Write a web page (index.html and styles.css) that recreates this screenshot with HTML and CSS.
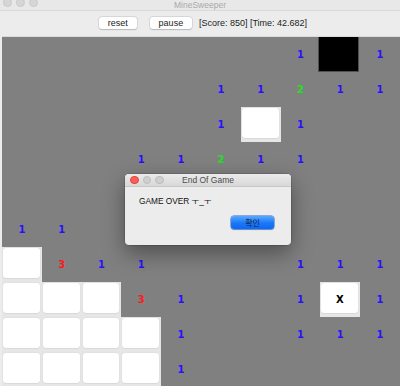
FILE: index.html
```html
<!DOCTYPE html>
<html>
<head>
<meta charset="utf-8">
<title>MineSweeper</title>
<link rel="stylesheet" href="styles.css">
</head>
<body>
<div class="titlebar">
  <div class="lights"><span></span><span></span><span></span></div>
  <div class="wtitle">MineSweeper</div>
  <div></div>
</div>
<div class="toolbar">
  <div class="btn reset">reset</div>
  <div class="btn pause">pause</div>
  <div class="status">[Score: 850] [Time: 42.682]</div>
</div>
<div class="board">
  <!-- row 0 -->
  <div class="cell"></div><div class="cell"></div><div class="cell"></div><div class="cell"></div><div class="cell"></div><div class="cell"></div><div class="cell"></div><div class="cell n1">1</div><div class="cell mine"></div><div class="cell n1">1</div>
  <!-- row 1 -->
  <div class="cell"></div><div class="cell"></div><div class="cell"></div><div class="cell"></div><div class="cell"></div><div class="cell n1">1</div><div class="cell n1">1</div><div class="cell n2">2</div><div class="cell n1">1</div><div class="cell n1">1</div>
  <!-- row 2 -->
  <div class="cell"></div><div class="cell"></div><div class="cell"></div><div class="cell"></div><div class="cell"></div><div class="cell n1">1</div><div class="cell btncell"><div class="face"></div></div><div class="cell n1">1</div><div class="cell"></div><div class="cell"></div>
  <!-- row 3 -->
  <div class="cell"></div><div class="cell"></div><div class="cell"></div><div class="cell n1">1</div><div class="cell n1">1</div><div class="cell n2">2</div><div class="cell n1">1</div><div class="cell n1">1</div><div class="cell"></div><div class="cell"></div>
  <!-- row 4 -->
  <div class="cell"></div><div class="cell"></div><div class="cell"></div><div class="cell"></div><div class="cell"></div><div class="cell"></div><div class="cell"></div><div class="cell"></div><div class="cell"></div><div class="cell"></div>
  <!-- row 5 -->
  <div class="cell n1">1</div><div class="cell n1">1</div><div class="cell"></div><div class="cell"></div><div class="cell"></div><div class="cell"></div><div class="cell"></div><div class="cell"></div><div class="cell"></div><div class="cell"></div>
  <!-- row 6 -->
  <div class="cell btncell"><div class="face"></div></div><div class="cell n3">3</div><div class="cell n1">1</div><div class="cell n1">1</div><div class="cell"></div><div class="cell"></div><div class="cell"></div><div class="cell n1">1</div><div class="cell n1">1</div><div class="cell n1">1</div>
  <!-- row 7 -->
  <div class="cell btncell"><div class="face"></div></div><div class="cell btncell"><div class="face"></div></div><div class="cell btncell"><div class="face"></div></div><div class="cell n3">3</div><div class="cell n1">1</div><div class="cell"></div><div class="cell"></div><div class="cell n1">1</div><div class="cell btncell"><div class="face">X</div></div><div class="cell n1">1</div>
  <!-- row 8 -->
  <div class="cell btncell"><div class="face"></div></div><div class="cell btncell"><div class="face"></div></div><div class="cell btncell"><div class="face"></div></div><div class="cell btncell"><div class="face"></div></div><div class="cell n1">1</div><div class="cell"></div><div class="cell"></div><div class="cell n1">1</div><div class="cell n1">1</div><div class="cell n1">1</div>
  <!-- row 9 -->
  <div class="cell btncell"><div class="face"></div></div><div class="cell btncell"><div class="face"></div></div><div class="cell btncell"><div class="face"></div></div><div class="cell btncell"><div class="face"></div></div><div class="cell n1">1</div><div class="cell"></div><div class="cell"></div><div class="cell"></div><div class="cell"></div><div class="cell"></div>
</div>

<div class="dialog">
  <div class="dtitlebar">
    <div class="dlights"><span class="red"></span><span></span><span></span></div>
    <div class="dtitle">End Of Game</div>
    <div></div>
  </div>
  <div class="dbody">
    <div class="msg">GAME OVER ㅜ_ㅜ</div>
    <div class="okrow"><div class="okbtn">확인</div></div>
  </div>
</div>
</body>
</html>
```
FILE: styles.css
```css
html, body {
  margin: 0;
  padding: 0;
}
body {
  width: 400px;
  height: 386px;
  overflow: hidden;
  background: #ececec;
  font-family: "Liberation Sans", Arial, "Noto Sans CJK KR", sans-serif;
  position: relative;
}

/* window title bar */
.titlebar {
  height: 11px;
  box-sizing: border-box;
  display: grid;
  grid-template-columns: 1fr auto 1fr;
  background: #e8e8e8;
  border-bottom: 1px solid #d9d9d9;
  overflow: hidden;
}
.lights {
  display: flex;
  gap: 4px;
  padding-left: 3px;
  margin-top: -2px;
}
.lights span {
  width: 9px;
  height: 9px;
  box-sizing: border-box;
  border-radius: 50%;
  background: #d6d6d6;
  border: 1px solid #c9c9c9;
}
.wtitle {
  font-size: 8.5px;
  line-height: 10px;
  color: #a8a8a8;
}

/* toolbar */
.toolbar {
  height: 25px;
  display: flex;
  align-items: center;
  justify-content: center;
  padding-left: 6px;
}
.btn {
  height: 12px;
  line-height: 12px;
  font-size: 9px;
  color: #222;
  text-align: center;
  background: #fff;
  border-radius: 3px;
  box-shadow: 0 0 0 0.5px #c6c6c6, 0 0.5px 1px rgba(0, 0, 0, 0.25);
  margin-top: -1px;
}
.reset {
  width: 38px;
  margin-right: 13px;
}
.pause {
  width: 42px;
  margin-right: 7px;
}
.status {
  font-size: 9px;
  color: #1b1b1b;
  margin-top: -1px;
}

/* board */
.board {
  margin-left: 2px;
  width: 398px;
  border-top: 1px solid #dadada;
  background: #808080;
  display: grid;
  grid-template-columns: repeat(10, 1fr);
  grid-auto-rows: 35px;
}
.cell {
  display: flex;
  align-items: center;
  justify-content: center;
  font-family: "DejaVu Sans", sans-serif;
  font-weight: bold;
  font-size: 10px;
  min-width: 0;
}
.n1 { color: #2a10ff; }
.n2 { color: #1fe01f; }
.n3 { color: #ff1a1a; }

.btncell {
  background: #e6e6e6;
  padding: 1px 2px 4px 1px;
  box-sizing: border-box;
  align-items: stretch;
  justify-content: stretch;
}
.face {
  flex: 1;
  background: #fff;
  border-radius: 3px;
  box-shadow: 0 0.5px 0 #cfcfcf, 0 0 0 0.5px #dedede;
  display: flex;
  align-items: center;
  justify-content: center;
  color: #000;
  font-size: 10px;
  padding-top: 2px;
}
.mine {
  background: #000;
  border: 1px solid #505050;
  border-top: none;
  margin-left: -2px;
  margin-right: 1px;
}

/* dialog */
.dialog {
  position: absolute;
  left: 125px;
  top: 174px;
  width: 166px;
  height: 71px;
  background: #ececec;
  border-radius: 4px;
  box-shadow: 0 0 0 0.5px rgba(0, 0, 0, 0.25), 0 8px 22px rgba(0, 0, 0, 0.4);
  overflow: hidden;
}
.dtitlebar {
  height: 13px;
  box-sizing: border-box;
  background: linear-gradient(#ebebeb, #d8d8d8);
  border-bottom: 1px solid #c6c6c6;
  display: grid;
  grid-template-columns: 1fr auto 1fr;
  align-items: center;
}
.dlights {
  display: flex;
  gap: 4px;
  padding-left: 5px;
}
.dlights span {
  width: 8.5px;
  height: 8.5px;
  box-sizing: border-box;
  border-radius: 50%;
  background: #cfcfcf;
  border: 0.5px solid #bcbcbc;
}
.dlights .red {
  background: #fc5e57;
  border-color: #df4841;
}
.dtitle {
  font-size: 8.5px;
  color: #4c4c4c;
  line-height: 12px;
}
.dbody {
  padding: 9px 17px 0 14px;
}
.msg {
  font-size: 8.3px;
  line-height: 10px;
  color: #111;
  font-family: "Liberation Sans", Arial, "Noto Sans CJK KR", sans-serif;
}
.okrow {
  display: flex;
  justify-content: flex-end;
  margin-top: 10px;
}
.okbtn {
  width: 43px;
  height: 13px;
  line-height: 13px;
  border-radius: 3px;
  background: linear-gradient(#5aa8fc, #1a78f7 55%, #0e68f2);
  box-shadow: 0 0 0 0.5px #2a6fd8, 0 0.5px 1px rgba(0, 0, 0, 0.3);
  text-align: center;
  font-size: 8px;
  color: #10204a;
  font-family: "Noto Sans CJK KR", sans-serif;
}
```
